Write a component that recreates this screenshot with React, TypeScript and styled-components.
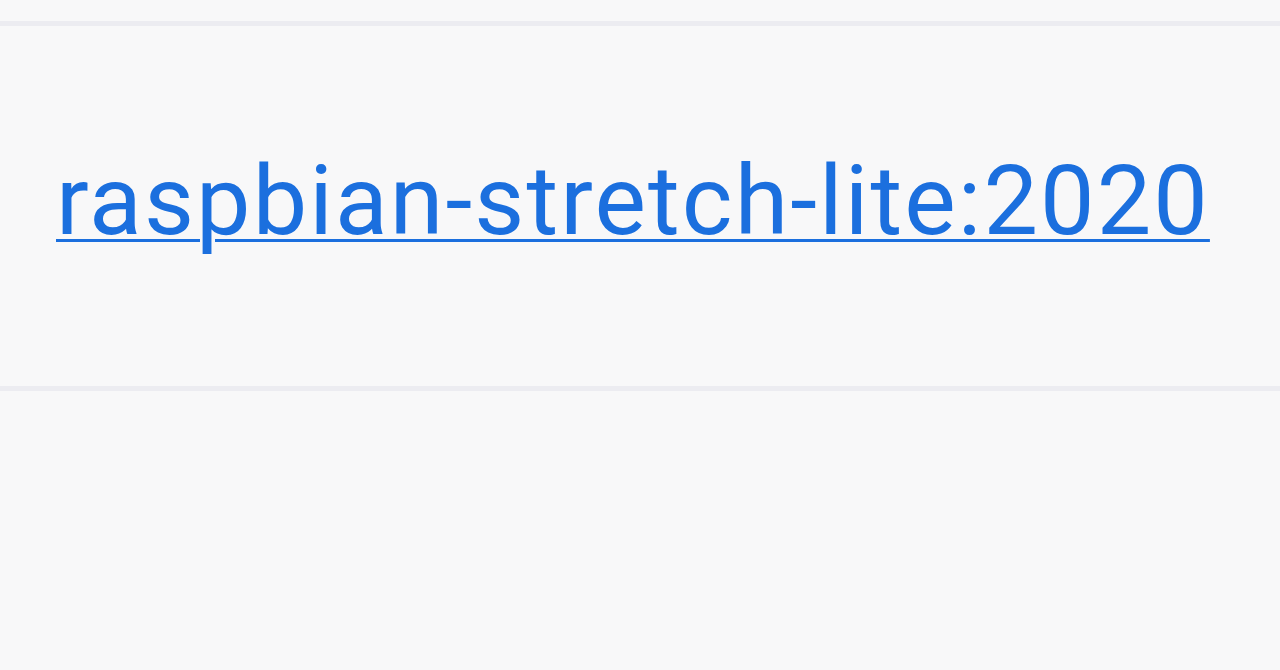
import styled, { createGlobalStyle } from "styled-components";

const GlobalStyle = createGlobalStyle`
  html, body {
    margin: 0;
    padding: 0;
    background: #f8f8f9;
    font-family: Roboto, "Liberation Sans", sans-serif;
  }
`;

const Page = styled.div`
  width: 1280px;
  height: 670px;
  overflow: hidden;
  padding-top: 21px;
  box-sizing: border-box;
`;

const Row = styled.div`
  height: 370px;
  box-sizing: border-box;
  border-top: 5px solid #ececf1;
  border-bottom: 5px solid #ececf1;
  display: flex;
  align-items: center;
  padding-left: 56px;
  padding-bottom: 10px;
`;

const TagLink = styled.a`
  color: #1b6fde;
  font-size: 97px;
  font-weight: 400;
  text-decoration: underline;
  text-decoration-thickness: 2.5px;
  text-underline-offset: 5px;
  letter-spacing: 2.1px;
  white-space: nowrap;
`;

export default function App() {
  return (
    <>
      <GlobalStyle />
      <Page>
        <Row>
          <TagLink href="#">raspbian-stretch-lite:2020</TagLink>
        </Row>
      </Page>
    </>
  );
}
